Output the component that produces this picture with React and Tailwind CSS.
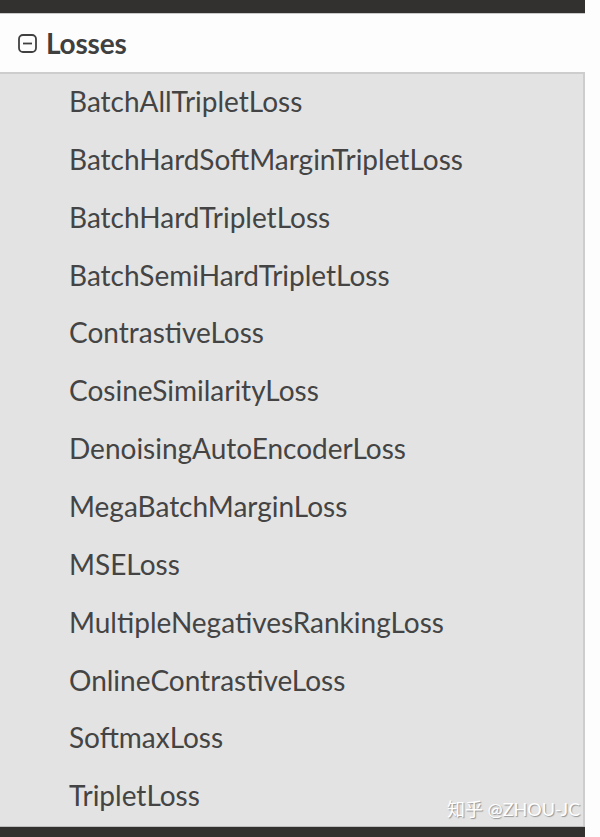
import React from "react";

const losses = [
  "BatchAllTripletLoss",
  "BatchHardSoftMarginTripletLoss",
  "BatchHardTripletLoss",
  "BatchSemiHardTripletLoss",
  "ContrastiveLoss",
  "CosineSimilarityLoss",
  "DenoisingAutoEncoderLoss",
  "MegaBatchMarginLoss",
  "MSELoss",
  "MultipleNegativesRankingLoss",
  "OnlineContrastiveLoss",
  "SoftmaxLoss",
  "TripletLoss",
];

export default function App() {
  return (
    <div className="w-[600px] h-[837px] bg-[#fdfdfd] overflow-hidden font-['Lato',_'Noto_Sans_CJK_SC',_sans-serif]">
      <div className="relative w-[585px] h-full flex flex-col">
        {/* top nav bar */}
        <div className="h-[14px] shrink-0 bg-[#323130] border-b border-[#c9c9c9]" />

        {/* section header */}
        <div className="h-[60px] shrink-0 flex items-center pl-[18px] gap-[9px] bg-[#fdfdfd] border-b-2 border-[#cdcdcd]">
          <svg width="19" height="19" viewBox="0 0 19 19" fill="none">
            <rect x="1" y="1" width="17" height="17" rx="4" stroke="#404040" strokeWidth="1.8" />
            <line x1="5" y1="9.5" x2="14" y2="9.5" stroke="#404040" strokeWidth="1.8" />
          </svg>
          <span className="text-[28px] font-bold text-[#404040] leading-none tracking-[-0.2px]">Losses</span>
        </div>

        {/* list */}
        <ul className="flex-1 bg-[#e3e3e3] border-r-2 border-[#cdcdcd] overflow-hidden">
          {losses.map((name) => (
            <li
              key={name}
              className="pl-[69px] h-[57.86px] leading-[54px] text-[28px] text-[#444444] whitespace-nowrap"
            >
              {name}
            </li>
          ))}
        </ul>

        {/* bottom bar */}
        <div className="h-[11px] shrink-0 bg-[#323130] border-t border-[#bdbdbd]" />

        {/* watermark */}
        <div className="absolute left-[447px] top-[796px] text-[18px] text-white whitespace-nowrap [text-shadow:1px_1px_1px_rgba(0,0,0,0.35)]">
          知乎 @ZHOU-JC
        </div>
      </div>
    </div>
  );
}
